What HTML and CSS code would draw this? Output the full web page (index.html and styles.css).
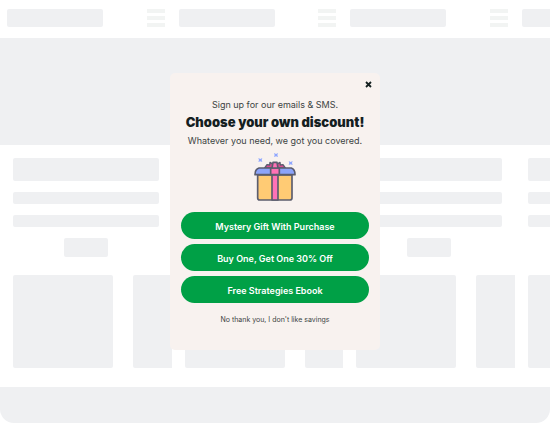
FILE: index.html
```html
<!DOCTYPE html>
<html lang="en">
<head>
    <meta charset="utf-8">
    <title>Choose your own discount!</title>
    <link rel="stylesheet" href="styles.css">
</head>
<body>
    <div class="page" aria-hidden="true">
        <div class="topbar">
            <div class="topbar-item"><div class="block logo"></div><div class="menu"><i></i><i></i><i></i></div></div>
            <div class="topbar-item"><div class="block logo"></div><div class="menu"><i></i><i></i><i></i></div></div>
            <div class="topbar-item"><div class="block logo"></div><div class="menu"><i></i><i></i><i></i></div></div>
            <div class="topbar-item"><div class="block logo"></div><div class="menu"><i></i><i></i><i></i></div></div>
        </div>
        <div class="hero"></div>
        <div class="columns">
            <div class="column">
                <div class="block heading"></div>
                <div class="block line"></div>
                <div class="block line"></div>
                <div class="block cta"></div>
                <div class="tiles"><div class="block tile"></div><div class="block tile cut"></div></div>
            </div>
            <div class="column">
                <div class="block heading"></div>
                <div class="block line"></div>
                <div class="block line"></div>
                <div class="block cta"></div>
                <div class="tiles"><div class="block tile"></div><div class="block tile cut"></div></div>
            </div>
            <div class="column">
                <div class="block heading"></div>
                <div class="block line"></div>
                <div class="block line"></div>
                <div class="block cta"></div>
                <div class="tiles"><div class="block tile"></div><div class="block tile cut"></div></div>
            </div>
            <div class="column">
                <div class="block heading"></div>
                <div class="block line"></div>
                <div class="block line"></div>
                <div class="block cta"></div>
                <div class="tiles"><div class="block tile"></div><div class="block tile cut"></div></div>
            </div>
        </div>
        <div class="footer"></div>
    </div>

    <div class="overlay">
        <div class="modal" role="dialog" aria-labelledby="modal-title">
            <button type="button" class="close" aria-label="Close">
                <svg viewBox="0 0 7 7" width="7" height="7"><path d="M1 1l5 5M6 1L1 6" stroke="#14201f" stroke-width="1.8" fill="none"/></svg>
            </button>
            <p class="text">Sign up for our emails &amp; SMS.</p>
            <h1 id="modal-title">Choose your own discount!</h1>
            <p class="text">Whatever you need, we got you covered.</p>
            <svg class="gift" viewBox="30 12 126 144" width="42" height="48">
                <g fill="#8ea6ff">
                    <path d="M43 27l6 3 6-3-2 6 2 6-6-2-6 2 2-6z"/>
                    <path d="M90 12l6 3 6-3-2 6 2 6-6-2-6 2 2-6z"/>
                    <path d="M134 36l6 3 6-3-2 6 2 6-6-2-6 2 2-6z"/>
                </g>
                <g stroke="#5b5d6e" stroke-width="5" stroke-linejoin="round">
                    <path d="M41 78h103v69q0 6-6 6H47q-6 0-6-6z" fill="#ffcb74"/>
                    <path d="M62 57l7-10 8 1 1-8 10 6-2 11zM124 57l-7-10-8 1-1-8-10 6 2 11z" fill="#d94d92" stroke-width="4"/>
                    <path d="M45 57h97q11 3 11 20H33q0-17 12-20z" fill="#8ca4fa"/>
                    <path d="M84 78h18v75H84z" fill="#ff72b6"/>
                    <path d="M80 57h26v20H80z" fill="#ff72b6"/>
                    <path d="M87 40h12l3 17H84z" fill="#ff72b6"/>
                </g>
            </svg>
            <div class="offers">
                <button type="button" class="offer">Mystery Gift With Purchase</button>
                <button type="button" class="offer">Buy One, Get One 30% Off</button>
                <button type="button" class="offer">Free Strategies Ebook</button>
            </div>
            <a href="#" class="decline">No thank you, I don't like savings</a>
        </div>
    </div>
</body>
</html>
```

FILE: styles.css
```css
:root {
    --block-color: #eff0f2;
    --modal-color: #f8f2ef;
    --text-color: #14201f;
    --green: #00a046;
}
* {
    box-sizing: border-box;
}
body {
    position: relative;
    margin: 0;
    background-color: #fff;
    color: var(--text-color);
    font-family: Inter, "Liberation Sans", sans-serif;
}
.page {
    display: flex;
    flex-direction: column;
    min-height: 100vh;
    overflow: hidden;
    border-radius: 0 0 14px 14px;
}
.block {
    background-color: var(--block-color);
    border-radius: 2px;
}
.topbar,
.columns {
    display: grid;
    grid-template-columns: repeat(4, 31.2%);
}
.topbar {
    padding: 9px 0 11px;
}
.topbar-item {
    display: flex;
    justify-content: space-between;
    padding: 0 7px;
}
.logo {
    width: 96px;
    height: 18px;
}
.menu {
    display: flex;
    flex-direction: column;
    justify-content: space-between;
    width: 18px;
}
.menu i {
    height: 4px;
    background-color: #f2f4f3;
}
.hero {
    height: 107px;
    background-color: var(--block-color);
}
.columns {
    padding: 13px 0 19px;
}
.column {
    display: flex;
    flex-direction: column;
    gap: 11px;
    padding-left: 13px;
}
.heading,
.line {
    margin-right: 13px;
}
.heading {
    height: 23px;
}
.line {
    height: 12px;
}
.cta {
    width: 44px;
    height: 19px;
    margin-left: 51px;
}
.tiles {
    display: flex;
    gap: 20px;
    margin-top: 7px;
}
.tile {
    width: 100px;
    height: 93px;
}
.tile.cut {
    flex: 1;
    border-radius: 2px 0 0 2px;
}
.footer {
    flex: 1;
    min-height: 36px;
    background-color: var(--block-color);
}
.overlay {
    position: absolute;
    inset: 0;
    display: flex;
    justify-content: center;
    align-items: center;
}
.modal {
    position: relative;
    display: flex;
    flex-direction: column;
    align-items: center;
    width: 210px;
    padding: 24px 11px;
    border-radius: 5px;
    background-color: var(--modal-color);
    text-align: center;
    white-space: nowrap;
}
.close {
    position: absolute;
    top: 7px;
    right: 7px;
    display: flex;
    padding: 1px;
    border: none;
    background: none;
    cursor: pointer;
}
.text {
    margin: 0;
    color: #3c4443;
    font-size: 9px;
    line-height: 16px;
}
h1 {
    margin: 0 0 2px;
    font-size: 13px;
    font-weight: 900;
    line-height: 18px;
}
.gift {
    display: block;
    margin-top: 4px;
}
.offers {
    display: flex;
    flex-direction: column;
    gap: 5px;
    width: 100%;
    margin: 11px 0;
}
.offer {
    height: 27px;
    padding: 1px 0 0;
    border: none;
    border-radius: 14px;
    background-color: var(--green);
    color: #fff;
    font-family: inherit;
    font-size: 9px;
    font-weight: 600;
    cursor: pointer;
}
.decline {
    color: #3c4443;
    font-size: 7px;
    line-height: 12px;
    text-decoration: none;
}
```
